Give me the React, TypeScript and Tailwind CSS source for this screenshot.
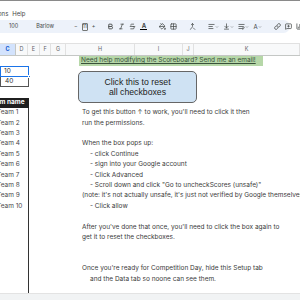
import {
  Bold,
  Italic,
  Strikethrough,
  PaintBucket,
  Grid2x2,
  AlignLeft,
  ArrowDownToLine,
  WrapText,
  Link,
  MessageSquarePlus,
  ChartColumn,
  Filter,
  Sigma,
  EllipsisVertical,
  ChevronDown,
  Merge,
} from "lucide-react";

const COLS = [
  { id: "D", w: "w-[12px]" },
  { id: "E", w: "w-[12px]" },
  { id: "F", w: "w-[11px]" },
  { id: "G", w: "w-[15px]" },
  { id: "H", w: "w-[69px]" },
  { id: "I", w: "w-[48px]" },
  { id: "J", w: "w-[11px]" },
  { id: "K", w: "w-[106px]" },
];

// right-side text rows, index 0 = first row under the header
const LINES: { text: string; indent?: boolean }[] = [
  { text: "" },
  { text: "" },
  { text: "" },
  { text: "" },
  { text: "" },
  { text: "To get this button ↑ to work, you'll need to click it then" },
  { text: "run the permissions." },
  { text: "" },
  { text: "When the box pops up:" },
  { text: "- click Continue", indent: true },
  { text: "- sign into your Google account", indent: true },
  { text: "- Click Advanced", indent: true },
  { text: "- Scroll down and click \"Go to uncheckScores (unsafe)\"", indent: true },
  { text: "(note: it's not actually unsafe, it's just not verified by Google themselves)" },
  { text: "- Click allow", indent: true },
  { text: "" },
  { text: "After you've done that once, you'll need to click the box again to" },
  { text: "get it to reset the checkboxes." },
  { text: "" },
  { text: "" },
  { text: "Once you're ready for Competition Day, hide this Setup tab" },
  { text: "and the Data tab so noone can see them.", indent: true },
  { text: "" },
];

const TEAMS = Array.from({ length: 10 }, (_, i) => `Team ${i + 1}`);

function Tool({ children }: { children: React.ReactNode }) {
  return <div className="flex items-center text-[#444746]">{children}</div>;
}

function Sep() {
  return <div className="w-px h-[7px] bg-[#c4c7c5] mx-[2px]" />;
}

export default function App() {
  const ic = "w-[7px] h-[7px]";
  return (
    <div className="w-[300px] h-[300px] overflow-hidden bg-white relative font-['Inter',sans-serif] text-[#444]">
      {/* window top edge */}
      <div className="h-px bg-[#8a8a8a]" />

      {/* menu row */}
      <div className="h-[19px] flex items-end pb-[2px] gap-[4px] text-[6px] text-[#444746] -ml-[2px]">
        <span>ons</span>
        <span>Help</span>
      </div>

      {/* toolbar */}
      <div className="h-[13px] bg-[#edf2fa] rounded-r-full w-[290px] flex items-center gap-[4px] pl-[1px] text-[5.5px]">
        <div className="w-px h-[6px] bg-[#c4c7c5]" />
        <span className="ml-[4px] text-[#444746]">100</span>
        <Sep />
        <span className="ml-[6px] text-[#444746]">Barlow</span>
        <ChevronDown className="w-[5px] h-[5px] ml-[4px] text-[#444746]" />
        <Sep />
        <span className="text-[#444746]">−</span>
        <div className="w-[11px] h-[8px] border border-[#747775] rounded-[1px] flex items-center justify-center text-[5px]">11</div>
        <span className="text-[#444746]">+</span>
        <Sep />
        <Tool><Bold className={ic} strokeWidth={3} /></Tool>
        <Tool><Italic className={ic} strokeWidth={2.5} /></Tool>
        <Tool><Strikethrough className={ic} strokeWidth={2.5} /></Tool>
        <div className="flex flex-col items-center">
          <span className="text-[6px] leading-[6px] font-bold text-[#444746]">A</span>
          <div className="w-[7px] h-[1.5px] bg-black" />
        </div>
        <Sep />
        <Tool><PaintBucket className={ic} strokeWidth={2.5} /></Tool>
        <Tool><Grid2x2 className={ic} strokeWidth={2.5} /></Tool>
        <Sep />
        <Tool><Merge className={ic} strokeWidth={2.5} /></Tool>
        <Sep />
        <Tool><AlignLeft className={ic} strokeWidth={2.5} /><ChevronDown className="w-[4px] h-[4px]" /></Tool>
        <Tool><ArrowDownToLine className={ic} strokeWidth={2.5} /><ChevronDown className="w-[4px] h-[4px]" /></Tool>
        <Tool><WrapText className={ic} strokeWidth={2.5} /><ChevronDown className="w-[4px] h-[4px]" /></Tool>
        <Tool><span className="text-[6px]">A</span><ChevronDown className="w-[4px] h-[4px]" /></Tool>
        <Sep />
        <Tool><Link className={ic} strokeWidth={2.5} /></Tool>
        <Tool><MessageSquarePlus className={ic} strokeWidth={2.5} /></Tool>
        <Tool><ChartColumn className={ic} strokeWidth={2.5} /></Tool>
        <Tool><Filter className={ic} strokeWidth={2.5} /></Tool>
        <Tool><Sigma className={ic} strokeWidth={2.5} /><ChevronDown className="w-[4px] h-[4px]" /></Tool>
        <Sep />
        <Tool><EllipsisVertical className={ic} strokeWidth={2.5} /></Tool>
      </div>

      {/* formula bar area */}
      <div className="h-[11px] border-b border-[#e1e1e1]" />

      {/* column headers */}
      <div className="h-[12px] flex text-[5.5px] text-[#5f6368] bg-[#f8f9fa] border-b border-[#c4c7c5]">
        <div className="w-[29px] bg-[#d3e3fd] text-[#0b57d0] font-bold flex items-center justify-center border-r border-[#c4c7c5]">C</div>
        {COLS.map((c) => (
          <div key={c.id} className={`${c.w} shrink-0 flex items-center justify-center border-r border-[#e1e1e1]`}>
            {c.id}
          </div>
        ))}
      </div>

      {/* grid body */}
      <div className="flex text-[6.5px]">
        {/* column C */}
        <div className="w-[29px] shrink-0 flex flex-col">
          <div className="h-[10.4px]" />
          <div className="h-[10.4px] border-[1.5px] border-[#1a73e8] flex items-center pl-[3px] relative text-[#333]">
            10
            <div className="absolute -right-[2.5px] -bottom-[2.5px] w-[3px] h-[3px] bg-[#1a73e8] border border-white" />
          </div>
          <div className="h-[10.4px] border border-t-0 border-[#555] flex items-center pl-[4px] text-[#333]">40</div>
          <div className="h-[10.4px]" />
          <div className="h-[10.4px] bg-[#1f1f1f] text-white font-bold flex items-center overflow-hidden whitespace-nowrap">
            <span className="-ml-[12px]">Team name</span>
          </div>
          {TEAMS.map((t) => (
            <div key={t} className="h-[10.4px] border-r-[1.5px] border-[#333] flex items-center overflow-hidden whitespace-nowrap text-[#4a4a4a]">
              <span className="-ml-[3px]">{t}</span>
            </div>
          ))}
          {Array.from({ length: 8 }, (_, i) => (
            <div key={i} className="h-[10.4px] border-r-[1.5px] border-[#333]" />
          ))}
        </div>

        {/* columns D onward */}
        <div className="flex-1 flex flex-col whitespace-nowrap">
          <div className="h-[10.4px] flex items-center pl-[50px]">
            <div className="bg-[#b6d7a8] h-full w-[184px] flex items-center pl-[2px] text-[#38503a] underline">
              Need help modifying the Scoreboard? Send me an email!
            </div>
          </div>
          {LINES.slice(1).map((l, i) => (
            <div key={i} className={`h-[10.4px] flex items-center text-[#3a3a3a] ${l.indent ? "pl-[61px]" : "pl-[53px]"}`}>
              {l.text}
            </div>
          ))}
        </div>
      </div>

      {/* bottom bar */}
      <div className="absolute left-0 right-0 bottom-0 h-[7px] bg-[#f1f3f4] border-t border-[#e3e3e3]" />

      {/* drawing: reset button */}
      <div className="absolute left-[78px] top-[71px] w-[119px] h-[32px] bg-[#cfe2f3] border border-[#666] rounded-[5px] flex flex-col items-center justify-center font-['Liberation_Sans',Arial,sans-serif] text-[8.7px] leading-[10.5px] text-[#222]">
        <span>Click this to reset</span>
        <span>all checkboxes</span>
      </div>
    </div>
  );
}
